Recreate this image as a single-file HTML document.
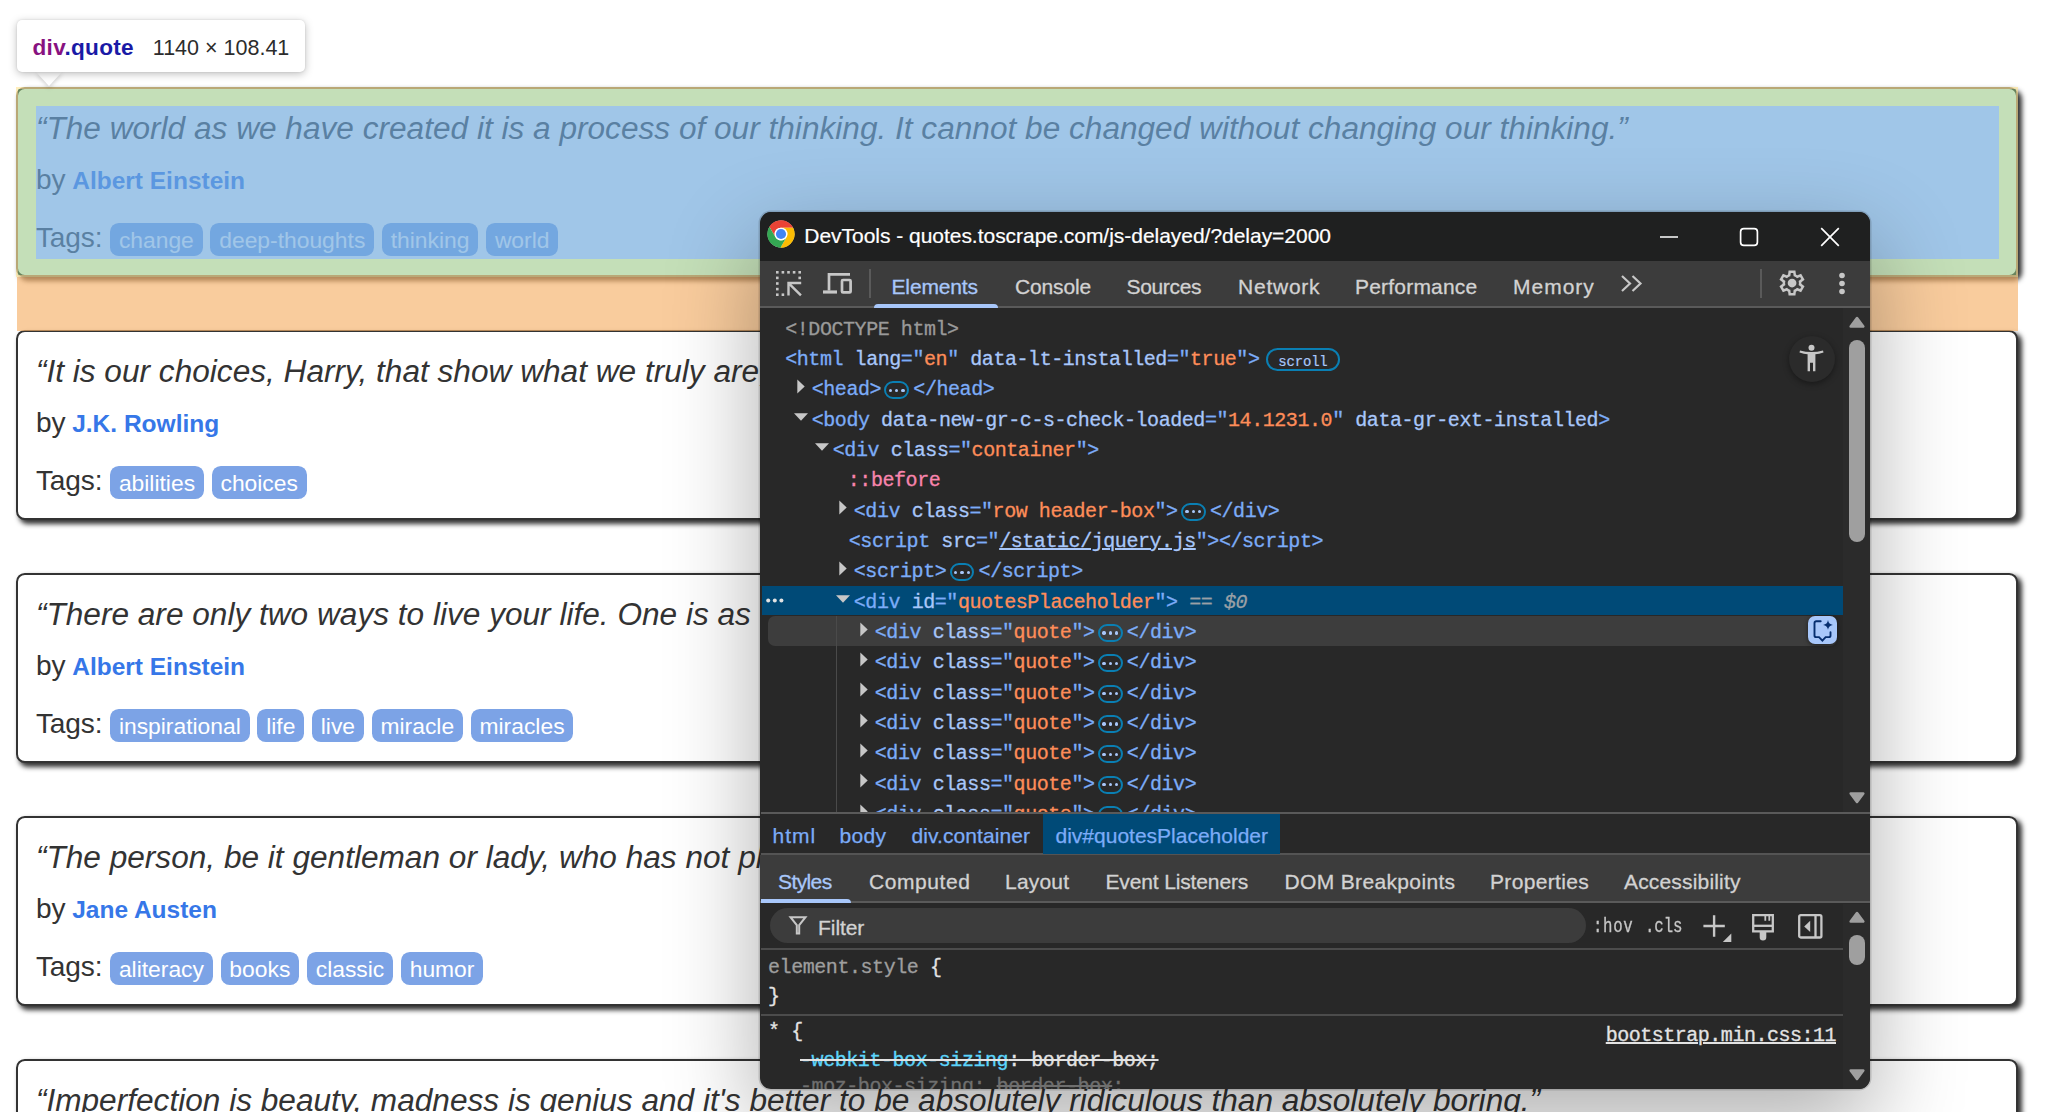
<!DOCTYPE html>
<html lang="en">
<head>
<meta charset="utf-8">
<title>Quotes to Scrape</title>
<style>
*{box-sizing:border-box;margin:0;padding:0}
html,body{width:2048px;height:1112px;overflow:hidden;background:#fff}
body{position:relative;font-family:"Liberation Sans",sans-serif;color:#333;font-size:28.1px;line-height:40px}
.quote{position:absolute;left:16px;width:2002px;height:189.6px;padding:16.75px 17.9px 17.25px;border:2px solid #333;border-radius:8.8px;box-shadow:3.5px 3.5px 5.3px #333;background:#fff;white-space:nowrap;overflow:hidden}
.quote .text{display:block;font-size:31.62px;line-height:45px;font-style:italic;margin-bottom:8.75px}
.quote .by{display:block}
.quote .author{font-size:24.5px;font-weight:bold;color:#3677E8;margin-left:-1.2px}
.quote .tl{letter-spacing:-.13px}
.quote .tags{margin-top:17.5px}
.quote .tag{font-size:22.85px;padding:3.5px 8.8px;border-radius:8.8px;color:#fff;background:#7CA3E6}
#q1{top:87px}#q2{top:330px}#q3{top:573px}#q4{top:816px}#q5{top:1059px}
/* highlight overlay */
#hl-margin{position:absolute;left:17px;top:277px;width:2001px;height:53.5px;background:rgba(246,178,107,.66)}
#hl-border{position:absolute;left:16px;top:87px;width:2002px;height:190px;border:2px solid rgba(255,229,153,.66)}
#hl-pad2{position:absolute;left:18px;top:89px;width:1998px;height:186px;border:17px solid rgba(147,196,125,.55);border-left-width:18px;border-right-width:17px;border-bottom-width:16px}
#hl-content{position:absolute;left:36px;top:106px;width:1963px;height:153px;background:rgba(111,168,220,.66)}
/* tooltip */
#tip{position:absolute;left:17px;top:20px;width:288px;height:52px;background:#fff;border-radius:5px;box-shadow:0 2px 9px rgba(0,0,0,.26),0 0 2px rgba(0,0,0,.12);font-family:"Liberation Sans","DejaVu Sans",sans-serif;font-size:21px;line-height:52px;white-space:nowrap}
#tip .n{position:absolute;left:15.5px;top:1.7px;font-weight:bold;color:#1a1aa6;font-size:22.6px;letter-spacing:.3px}
#tip .n i{font-style:normal;color:#881280}
#tip .d{position:absolute;left:135.8px;top:1.6px;color:#2c2c2c;font-size:21.5px;letter-spacing:0}
#tiparrow{position:absolute;left:36px;top:71.5px;width:0;height:0;border-left:13.2px solid transparent;border-right:13.2px solid transparent;border-top:14.5px solid #fff;filter:drop-shadow(0 2px 2px rgba(0,0,0,.18))}
/* devtools window */
#dtshadow{position:absolute;left:760px;top:212px;width:1110px;height:877px;border-radius:11px;box-shadow:0 34px 90px 4px rgba(0,0,0,.3),0 0 0 1.5px rgba(0,0,0,.15)}
#dt{position:absolute;left:760px;top:212px;width:1110px;height:877px;border-left:1px solid transparent;border-radius:11px;background:linear-gradient(#1f2020 0,#1f2020 48.8px,#3c3c3c 48.8px,#3c3c3c 94px,#5a5a5a 94px,#5a5a5a 96px,#282828 96px,#282828 643.4px,#3c3c3c 643.4px,#3c3c3c 689px,#5a5a5a 689px,#5a5a5a 691px,#282828 691px) border-box;overflow:hidden;font-family:"Liberation Sans","DejaVu Sans",sans-serif;font-size:21px;color:#e3e3e3;line-height:normal}
#dt .abs{position:absolute;white-space:nowrap}
#dt svg{position:absolute;overflow:visible}
#titlebar{position:absolute;left:0;top:0;width:1109px;height:48.8px;background:#1f2020}
#title{position:absolute;left:44.3px;top:0;height:48.4px;line-height:47px;color:#fff;font-size:21px;white-space:nowrap;-webkit-text-stroke:.2px #fff}
#toolbar{position:absolute;left:0;top:48.8px;width:1109px;height:47.2px;background:#3c3c3c;border-bottom:2px solid #5a5a5a}
.tab{position:absolute;height:30px;line-height:30px;color:#d2d2d2;white-space:nowrap;font-size:21px;-webkit-text-stroke:.3px currentColor}
.tab.on{color:#a8c7fa}
.uline{position:absolute;height:4px;background:#a8c7fa;border-radius:4px 4px 0 0}
.vsep{position:absolute;width:2px;background:#5a5a5a}
.mono{font-family:"Liberation Mono","DejaVu Sans Mono",monospace;font-size:20px;letter-spacing:-.437px;-webkit-text-stroke:.3px currentColor}
/* tree */
#tree{position:absolute;left:0;top:95.6px;width:1082px;height:504.6px;overflow:hidden;background:#282828}
.row{position:absolute;left:0;width:1082px;height:30.33px;line-height:30.33px;white-space:nowrap}
#tree .row{margin-top:-95.6px}
.row .code{position:absolute;top:0;height:30.33px;line-height:30.33px;white-space:pre}
.tg{color:#7cacf8}.an{color:#a8c7fa}.av{color:#fe8d59}.ps{color:#f985ad}.dc{color:#9a9a9a}
.lnk{text-decoration:underline;color:#a8c7fa}
.eq{color:#9aa0a6}.eq i{font-style:italic}
.tri{top:3.8px;fill:#c7c7c7}
.tri.trid{top:7.2px}
.ell{display:inline-block;position:relative;width:24.7px;height:17.9px;border:2px solid #0a7fb3;border-radius:9px;vertical-align:-4px;margin:0 4.3px 0 3.3px;letter-spacing:0}
.ell i{position:absolute;top:5.3px;width:3.3px;height:3.3px;border-radius:50%;background:#a8c7fa}
.ell i:nth-child(1){left:2.4px}.ell i:nth-child(2){left:8.7px}.ell i:nth-child(3){left:15px}
.badge{display:inline-block;height:23.5px;line-height:24px;border:2px solid #0a7fb3;border-radius:12px;padding:0 10.3px;margin-left:6.6px;font-size:14px;letter-spacing:-.2px;color:#a8c7fa;vertical-align:-1px;-webkit-text-stroke:.2px currentColor}
#selrow{position:absolute;left:1px;top:373.6px;width:1081.7px;height:29.4px;background:#004a77}
#hovrow{position:absolute;left:6.5px;top:403.8px;width:1069px;height:30.2px;background:#3d3d3d;border-radius:7px}
#guide{position:absolute;left:75px;top:403.8px;width:1.2px;height:200px;background:#4a4a4a}
.sb{position:absolute;left:1082px;width:27px;background:#2b2b2b}
.sbthumb{position:absolute;left:1088px;width:15.5px;background:#9f9f9f;border-radius:8px}
/* bottom */
#crumbs{position:absolute;left:0;top:600px;width:1109px;height:43.4px;background:#282828;border-top:2px solid #5a5a5a;border-bottom:2px solid #545454}
.crumb{position:absolute;top:0;height:39.6px;line-height:44px;color:#7cacf8;white-space:nowrap;-webkit-text-stroke:.25px currentColor}
#crumbsel{position:absolute;left:282px;top:0;width:237px;height:39.6px;background:#004a77}
#stabs{position:absolute;left:0;top:643.4px;width:1109px;height:47.6px;background:#3c3c3c;border-bottom:2px solid #5a5a5a}
#filterbar{position:absolute;left:0;top:690.6px;width:1082px;height:47.7px;background:#282828;border-bottom:2px solid #4c4c4c}
#filterpill{position:absolute;left:8.5px;top:5.4px;width:816px;height:35.5px;border-radius:18px;background:#3c3c3c}
#styles{position:absolute;left:0;top:738.8px;width:1082px;height:140px}
.sline{position:absolute;left:7px;white-space:pre;height:30px;line-height:30px}
.gray{color:#9e9e9e}
.hsep{position:absolute;left:0;width:1082px;height:2px;background:#4c4c4c}
.tab.sq{transform:scaleX(.75);transform-origin:0 50%;font-size:21px;color:#c7c7c7}

</style>
</head>
<body>
<div class="quote" id="q1"><span class="text">“The world as we have created it is a process of our thinking. It cannot be changed without changing our thinking.”</span><span class="by">by <small class="author">Albert Einstein</small></span><div class="tags"><span class="tl">Tags: </span><a class="tag">change</a> <a class="tag">deep-thoughts</a> <a class="tag">thinking</a> <a class="tag">world</a></div></div>
<div class="quote" id="q2"><span class="text">“It is our choices, Harry, that show what we truly are, far more than our abilities.”</span><span class="by">by <small class="author">J.K. Rowling</small></span><div class="tags"><span class="tl">Tags: </span><a class="tag">abilities</a> <a class="tag">choices</a></div></div>
<div class="quote" id="q3"><span class="text">“There are only two ways to live your life. One is as though nothing is a miracle. The other is as though everything is a miracle.”</span><span class="by">by <small class="author">Albert Einstein</small></span><div class="tags"><span class="tl">Tags: </span><a class="tag">inspirational</a> <a class="tag">life</a> <a class="tag">live</a> <a class="tag">miracle</a> <a class="tag">miracles</a></div></div>
<div class="quote" id="q4"><span class="text">“The person, be it gentleman or lady, who has not pleasure in a good novel, must be intolerably stupid.”</span><span class="by">by <small class="author">Jane Austen</small></span><div class="tags"><span class="tl">Tags: </span><a class="tag">aliteracy</a> <a class="tag">books</a> <a class="tag">classic</a> <a class="tag">humor</a></div></div>
<div class="quote" id="q5"><span class="text">“Imperfection is beauty, madness is genius and it's better to be absolutely ridiculous than absolutely boring.”</span><span class="by">by <small class="author">Marilyn Monroe</small></span><div class="tags"><span class="tl">Tags: </span><a class="tag">be-yourself</a> <a class="tag">inspirational</a></div></div>

<div id="hl-margin"></div>
<div id="hl-border"></div>
<div id="hl-pad2"></div>
<div id="hl-content"></div>
<div id="tiparrow"></div>
<div id="tip"><span class="n"><i>div</i>.quote</span><span class="d">1140 × 108.41</span></div>

<div id="dtshadow"></div>
<div id="dt">
<div id="titlebar">
<svg style="left:4.7px;top:7px" width="30" height="30" viewBox="0 0 48 48"><circle cx="24" cy="24" r="21.5" fill="#fff"/><path d="M5.42 12.22 A22 22 0 0 1 43.49 13.80 L24.00 13.80 A10.2 10.2 0 0 0 15.17 29.10 Z" fill="#ea4335"/><path d="M43.49 13.80 A22 22 0 0 1 23.09 45.98 L32.83 29.10 A10.2 10.2 0 0 0 24.00 13.80 Z" fill="#fbbc04"/><path d="M23.09 45.98 A22 22 0 0 1 5.42 12.22 L15.17 29.10 A10.2 10.2 0 0 0 32.83 29.10 Z" fill="#34a853"/><circle cx="24" cy="24" r="10.2" fill="#fff"/><circle cx="24" cy="24" r="8.1" fill="#4285f4"/></svg>
<div class="ttl" id="title" style="left:43.30px;letter-spacing:-0.03px">DevTools - quotes.toscrape.com/js-delayed/?delay=2000</div>
<svg style="left:898px;top:15px" width="20" height="20" viewBox="0 0 20 20"><path d="M1 10H19" stroke="#fff" stroke-width="1.7" fill="none"/></svg>
<svg style="left:978px;top:15px" width="20" height="20" viewBox="0 0 20 20"><rect x="1.6" y="1.6" width="16.8" height="16.8" rx="3.2" stroke="#fff" stroke-width="1.7" fill="none"/></svg>
<svg style="left:1059px;top:15px" width="20" height="20" viewBox="0 0 20 20"><path d="M1.2 1.2L18.8 18.8M18.8 1.2L1.2 18.8" stroke="#fff" stroke-width="1.7" fill="none"/></svg>
</div>
<div id="toolbar"></div>
<!-- toolbar icons -->
<svg style="left:14.8px;top:58.9px" width="26" height="26" viewBox="0 0 26 26" fill="#c7c7c7"><rect x="0.0" y="0.0" width="2.6" height="2.6"/><rect x="5.6" y="0.0" width="2.6" height="2.6"/><rect x="11.2" y="0.0" width="2.6" height="2.6"/><rect x="16.8" y="0.0" width="2.6" height="2.6"/><rect x="22.4" y="0.0" width="2.6" height="2.6"/><rect x="0.0" y="5.6" width="2.6" height="2.6"/><rect x="0.0" y="11.2" width="2.6" height="2.6"/><rect x="0.0" y="16.8" width="2.6" height="2.6"/><rect x="0.0" y="22.4" width="2.6" height="2.6"/><rect x="22.4" y="5.6" width="2.6" height="2.6"/><rect x="5.6" y="22.4" width="2.6" height="2.6"/><path d="M11.3 24.4V10.8H25.2V13.2H15.4L25.8 23.6L24.1 25.3L13.7 14.9V24.4Z"/></svg>
<svg style="left:62px;top:61px" width="29" height="21" viewBox="0 0 29 21" fill="none" stroke="#c7c7c7" stroke-width="2.7"><path d="M27 1.4H6V17.5"/><path d="M0 19H14" stroke-width="3.2"/><rect x="19" y="7" width="8.6" height="12.4" rx="1"/></svg>
<div class="vsep" style="left:108px;top:57px;height:28.5px"></div>
<div class="tab on" id="t1" style="left:130.50px;top:59.8px;letter-spacing:-0.14px">Elements</div>
<div class="uline" style="left:113px;top:91.8px;width:123.5px"></div>
<div class="tab" id="t2" style="left:254.00px;top:59.8px;letter-spacing:-0.16px">Console</div>
<div class="tab" id="t3" style="left:365.50px;top:59.8px;letter-spacing:-0.34px">Sources</div>
<div class="tab" id="t4" style="left:477.10px;top:59.8px;letter-spacing:0.75px">Network</div>
<div class="tab" id="t5" style="left:594.00px;top:59.8px;letter-spacing:0.20px">Performance</div>
<div class="tab" id="t6" style="left:752.00px;top:59.8px;letter-spacing:1.00px">Memory</div>
<svg style="left:859.5px;top:63px" width="21" height="17" viewBox="0 0 21 17" fill="none" stroke="#c7c7c7" stroke-width="2.2"><path d="M1 1L9 8.5L1 16M11.5 1L19.5 8.5L11.5 16"/></svg>
<div class="vsep" style="left:998.5px;top:57px;height:28.5px"></div>
<svg style="left:1016.4px;top:56.3px" width="30" height="30" viewBox="0 0 24 24"><path fill="#c7c7c7" d="M9.25 22l-.4-3.2q-.325-.125-.612-.3-.288-.175-.563-.375L4.7 19.375l-2.75-4.75 2.575-1.95Q4.5 12.5 4.5 12.338v-.675q0-.163.025-.338L1.95 9.375l2.75-4.75 2.975 1.25q.275-.2.575-.375.3-.175.6-.3l.4-3.2h5.5l.4 3.2q.325.125.613.3.287.175.562.375l2.975-1.25 2.75 4.75-2.575 1.95q.025.175.025.338v.674q0 .163-.05.338l2.575 1.95-2.75 4.75-2.95-1.25q-.275.2-.575.375-.3.175-.6.3l-.4 3.2zm1.75-2h1.975l.35-2.65q.775-.2 1.438-.588.662-.387 1.212-.937l2.475 1.025.975-1.7-2.15-1.625q.125-.35.175-.738.05-.387.05-.787t-.05-.788q-.05-.387-.175-.737l2.15-1.625-.975-1.7-2.475 1.05q-.55-.575-1.212-.963-.663-.387-1.438-.587L13 4h-1.975l-.35 2.65q-.775.2-1.437.587-.663.388-1.213.938L5.55 7.15l-.975 1.7 2.15 1.6q-.125.375-.175.75-.05.375-.05.8 0 .4.05.775t.175.75l-2.15 1.625.975 1.7 2.475-1.05q.55.575 1.213.962.662.388 1.437.588zm1.05-4.5q1.45 0 2.475-1.025Q15.550 13.450 15.550 12q0-1.450-1.025-2.475Q13.500 8.500 12.050 8.500q-1.475 0-2.488 1.025Q8.550 10.550 8.550 12q0 1.450 1.012 2.475Q10.575 15.500 12.050 15.500z"/></svg>
<svg style="left:1077px;top:60px" width="8" height="24" viewBox="0 0 8 24"><circle cx="4" cy="3.5" r="2.8" fill="#c7c7c7"/><circle cx="4" cy="11.5" r="2.8" fill="#c7c7c7"/><circle cx="4" cy="19.5" r="2.8" fill="#c7c7c7"/></svg>
<!-- tree -->
<div id="tree">
<div id="selrow" style="margin-top:-95.6px"></div>
<div id="hovrow" style="margin-top:-95.6px"></div>
<div id="guide" style="margin-top:-95.6px"></div>
<div class="row" style="top:102.60px"><span class="code mono" style="left:24.2px"><span class="dc">&lt;!DOCTYPE html&gt;</span></span></div>
<div class="row" style="top:132.93px"><span class="code mono" style="left:24.2px"><span class="tg">&lt;html </span><span class="an">lang</span><span class="tg">="</span><span class="av">en</span><span class="tg">"</span> <span class="an">data-lt-installed</span><span class="tg">="</span><span class="av">true</span><span class="tg">"</span><span class="tg">&gt;</span><span class="badge">scroll</span></span></div>
<div class="row" style="top:163.26px"><svg class="tri" style="left:35.8px" width="8" height="15" viewBox="0 0 8 15"><path d="M0.3 0.4 L7.7 7.5 L0.3 14.6 Z"/></svg><span class="code mono" style="left:50.7px"><span class="tg">&lt;head&gt;</span><span class="ell"><i></i><i></i><i></i></span><span class="tg">&lt;/head&gt;</span></span></div>
<div class="row" style="top:193.59px"><svg class="tri trid" style="left:32.7px" width="14" height="8" viewBox="0 0 14 8"><path d="M0 0.3 L14 0.3 L7 7.8 Z"/></svg><span class="code mono" style="left:50.7px"><span class="tg">&lt;body </span><span class="an">data-new-gr-c-s-check-loaded</span><span class="tg">="</span><span class="av">14.1231.0</span><span class="tg">"</span> <span class="an">data-gr-ext-installed</span><span class="tg">&gt;</span></span></div>
<div class="row" style="top:223.92px"><svg class="tri trid" style="left:53.7px" width="14" height="8" viewBox="0 0 14 8"><path d="M0 0.3 L14 0.3 L7 7.8 Z"/></svg><span class="code mono" style="left:71.8px"><span class="tg">&lt;div </span><span class="an">class</span><span class="tg">="</span><span class="av">container</span><span class="tg">"</span><span class="tg">&gt;</span></span></div>
<div class="row" style="top:254.25px"><span class="code mono" style="left:86.8px"><span class="ps">::before</span></span></div>
<div class="row" style="top:284.58px"><svg class="tri" style="left:77.9px" width="8" height="15" viewBox="0 0 8 15"><path d="M0.3 0.4 L7.7 7.5 L0.3 14.6 Z"/></svg><span class="code mono" style="left:92.8px"><span class="tg">&lt;div </span><span class="an">class</span><span class="tg">="</span><span class="av">row header-box</span><span class="tg">"</span><span class="tg">&gt;</span><span class="ell"><i></i><i></i><i></i></span><span class="tg">&lt;/div&gt;</span></span></div>
<div class="row" style="top:314.91px"><span class="code mono" style="left:87.8px"><span class="tg">&lt;script </span><span class="an">src</span><span class="tg">="</span><span class="av"><span class="lnk">/static/jquery.js</span></span><span class="tg">"</span><span class="tg">&gt;&lt;/script&gt;</span></span></div>
<div class="row" style="top:345.24px"><svg class="tri" style="left:77.9px" width="8" height="15" viewBox="0 0 8 15"><path d="M0.3 0.4 L7.7 7.5 L0.3 14.6 Z"/></svg><span class="code mono" style="left:92.8px"><span class="tg">&lt;script&gt;</span><span class="ell"><i></i><i></i><i></i></span><span class="tg">&lt;/script&gt;</span></span></div>
<div class="row" style="top:375.57px"><svg class="tri trid" style="left:74.8px" width="14" height="8" viewBox="0 0 14 8"><path d="M0 0.3 L14 0.3 L7 7.8 Z"/></svg><span class="code mono" style="left:92.8px"><span class="tg">&lt;div </span><span class="an">id</span><span class="tg">="</span><span class="av">quotesPlaceholder</span><span class="tg">"</span><span class="tg">&gt;</span><span class="eq"> == <i>$0</i></span></span></div>
<div class="row" style="top:405.90px"><svg class="tri" style="left:98.9px" width="8" height="15" viewBox="0 0 8 15"><path d="M0.3 0.4 L7.7 7.5 L0.3 14.6 Z"/></svg><span class="code mono" style="left:113.8px"><span class="tg">&lt;div </span><span class="an">class</span><span class="tg">="</span><span class="av">quote</span><span class="tg">"</span><span class="tg">&gt;</span><span class="ell"><i></i><i></i><i></i></span><span class="tg">&lt;/div&gt;</span></span></div>
<div class="row" style="top:436.23px"><svg class="tri" style="left:98.9px" width="8" height="15" viewBox="0 0 8 15"><path d="M0.3 0.4 L7.7 7.5 L0.3 14.6 Z"/></svg><span class="code mono" style="left:113.8px"><span class="tg">&lt;div </span><span class="an">class</span><span class="tg">="</span><span class="av">quote</span><span class="tg">"</span><span class="tg">&gt;</span><span class="ell"><i></i><i></i><i></i></span><span class="tg">&lt;/div&gt;</span></span></div>
<div class="row" style="top:466.56px"><svg class="tri" style="left:98.9px" width="8" height="15" viewBox="0 0 8 15"><path d="M0.3 0.4 L7.7 7.5 L0.3 14.6 Z"/></svg><span class="code mono" style="left:113.8px"><span class="tg">&lt;div </span><span class="an">class</span><span class="tg">="</span><span class="av">quote</span><span class="tg">"</span><span class="tg">&gt;</span><span class="ell"><i></i><i></i><i></i></span><span class="tg">&lt;/div&gt;</span></span></div>
<div class="row" style="top:496.89px"><svg class="tri" style="left:98.9px" width="8" height="15" viewBox="0 0 8 15"><path d="M0.3 0.4 L7.7 7.5 L0.3 14.6 Z"/></svg><span class="code mono" style="left:113.8px"><span class="tg">&lt;div </span><span class="an">class</span><span class="tg">="</span><span class="av">quote</span><span class="tg">"</span><span class="tg">&gt;</span><span class="ell"><i></i><i></i><i></i></span><span class="tg">&lt;/div&gt;</span></span></div>
<div class="row" style="top:527.22px"><svg class="tri" style="left:98.9px" width="8" height="15" viewBox="0 0 8 15"><path d="M0.3 0.4 L7.7 7.5 L0.3 14.6 Z"/></svg><span class="code mono" style="left:113.8px"><span class="tg">&lt;div </span><span class="an">class</span><span class="tg">="</span><span class="av">quote</span><span class="tg">"</span><span class="tg">&gt;</span><span class="ell"><i></i><i></i><i></i></span><span class="tg">&lt;/div&gt;</span></span></div>
<div class="row" style="top:557.55px"><svg class="tri" style="left:98.9px" width="8" height="15" viewBox="0 0 8 15"><path d="M0.3 0.4 L7.7 7.5 L0.3 14.6 Z"/></svg><span class="code mono" style="left:113.8px"><span class="tg">&lt;div </span><span class="an">class</span><span class="tg">="</span><span class="av">quote</span><span class="tg">"</span><span class="tg">&gt;</span><span class="ell"><i></i><i></i><i></i></span><span class="tg">&lt;/div&gt;</span></span></div>
<div class="row" style="top:587.88px"><svg class="tri" style="left:98.9px" width="8" height="15" viewBox="0 0 8 15"><path d="M0.3 0.4 L7.7 7.5 L0.3 14.6 Z"/></svg><span class="code mono" style="left:113.8px"><span class="tg">&lt;div </span><span class="an">class</span><span class="tg">="</span><span class="av">quote</span><span class="tg">"</span><span class="tg">&gt;</span><span class="ell"><i></i><i></i><i></i></span><span class="tg">&lt;/div&gt;</span></span></div>
<svg style="left:4.5px;top:290px" width="18" height="5" viewBox="0 0 18 5"><circle cx="2.2" cy="2.5" r="2" fill="#e3e3e3"/><circle cx="8.8" cy="2.5" r="2" fill="#e3e3e3"/><circle cx="15.4" cy="2.5" r="2" fill="#e3e3e3"/></svg>
<!-- AI button -->
<div class="abs" style="left:1047px;top:308px;width:28.8px;height:28.8px;border-radius:7px;background:#a8c7fa;box-shadow:0 1px 4px rgba(0,0,0,.5)"></div>
<svg style="left:1047px;top:308px" width="28.8" height="28.8" viewBox="0 0 28.8 28.8"><path d="M12.700 5.200H8.200a1.700 1.700 0 0 0-1.700 1.700V19.400a1.700 1.700 0 0 0 1.700 1.700H11L14.400 24.600L17.600 21.100H20.800a1.700 1.700 0 0 0 1.700-1.700V16.200" stroke="#062e6f" stroke-width="1.900" fill="none" stroke-linecap="round"/><path d="M20 4Q20.600 8.300 24.900 8.900Q20.600 9.500 20 13.800Q19.400 9.500 15.100 8.900Q19.400 8.300 20 4Z" fill="#062e6f"/></svg>
<!-- accessibility floating button -->
<div class="abs" style="left:1027.7px;top:28.2px;width:46px;height:46px;border-radius:50%;background:#2b2b2b;box-shadow:0 2px 6px rgba(0,0,0,.4)"></div>
<svg style="left:1038.2px;top:36.800px" width="25" height="28.600" viewBox="0 0 25 28" fill="#c7c7c7"><circle cx="12.5" cy="3.4" r="3"/><path d="M0.5 8.2L1 6.2Q12.5 9.2 24 6.200L24.500 8.200Q20 9.600 16.400 10V27H14V18.500H11V27H8.600V10Q5 9.600 0.500 8.200Z"/></svg>
</div>
<!-- tree scrollbar -->
<div class="sb" style="top:95.6px;height:504.6px"></div>
<svg style="left:1087.5px;top:104px" width="16" height="12" viewBox="0 0 16 12"><path d="M8 2L14.300 10.500H1.700Z" fill="#9f9f9f" stroke="#9f9f9f" stroke-width="2.600" stroke-linejoin="round"/></svg>
<div class="sbthumb" style="top:127.5px;height:202px"></div>
<svg style="left:1087.5px;top:579.5px" width="16" height="12" viewBox="0 0 16 12"><path d="M8 10L14.300 1.500H1.700Z" fill="#9f9f9f" stroke="#9f9f9f" stroke-width="2.600" stroke-linejoin="round"/></svg>
<!-- breadcrumbs -->
<div id="crumbs">
<div id="crumbsel"></div>
<div class="crumb" id="c1" style="left:11.5px;letter-spacing:1.00px">html</div>
<div class="crumb" id="c2" style="left:78.5px;letter-spacing:0.33px">body</div>
<div class="crumb" id="c3" style="left:150.5px;letter-spacing:0.08px">div.container</div>
<div class="crumb" id="c4" style="left:294.50px;color:#7cacf8;letter-spacing:0.00px">div#quotesPlaceholder</div>
</div>
<!-- styles tabs -->
<div id="stabs"></div>
<div class="tab on" id="s1" style="left:17.00px;top:654.8px;letter-spacing:-0.60px">Styles</div>
<div class="uline" style="left:0;top:686.6px;width:90px;border-radius:0 4px 0 0"></div>
<div class="tab" id="s2" style="left:108.00px;top:654.8px;letter-spacing:0.57px">Computed</div>
<div class="tab" id="s3" style="left:244.00px;top:654.8px;letter-spacing:0.20px">Layout</div>
<div class="tab" id="s4" style="left:344.50px;top:654.8px;letter-spacing:-0.14px">Event Listeners</div>
<div class="tab" id="s5" style="left:523.50px;top:654.8px;letter-spacing:0.35px">DOM Breakpoints</div>
<div class="tab" id="s6" style="left:729.00px;top:654.8px;letter-spacing:0.33px">Properties</div>
<div class="tab" id="s7" style="left:863px;top:654.8px;letter-spacing:0.17px">Accessibility</div>
<!-- filter bar -->
<div id="filterbar">
<div id="filterpill"></div>
<svg style="left:27.5px;top:13.9px" width="18" height="19" viewBox="0 0 18 19" fill="none" stroke="#c7c7c7" stroke-width="2"><path d="M1.500 1.200H16.500L10.200 9V17.500H7.800V9Z"/></svg>
<div class="tab" id="f0" style="left:57.10px;top:10px;letter-spacing:-0.10px">Filter</div>
<div class="tab mono sq" id="f1" style="left:832.00px;top:9.6px;letter-spacing:0.83px">:hov</div>
<div class="tab mono sq" id="f2" style="left:883.50px;top:9.6px;letter-spacing:-0.17px">.cls</div>
<svg style="left:941.6px;top:9.4px" width="30" height="30" viewBox="0 0 30 30" fill="none" stroke="#c7c7c7" stroke-width="2.4"><path d="M0.4 14H21.8M11.1 3.3V24.700"/><path d="M28.300 21.400V29.900H19.800Z" fill="#c7c7c7" stroke="none"/></svg>
<svg style="left:991px;top:11px" width="22" height="27" viewBox="0 0 22 27" fill="none" stroke="#c7c7c7" stroke-width="2.3"><path d="M1.200 1.200H20.800V17.300H1.200Z"/><path d="M1.200 11.800H20.800"/><path d="M13.300 1.500V6.800M17.300 1.500V6.800" stroke-width="1.800"/><path d="M7.700 17.300H14.300V23.200a3.300 3.300 0 0 1-6.600 0Z" fill="#c7c7c7" stroke="none"/></svg>
<svg style="left:1037px;top:11px" width="25" height="25" viewBox="0 0 25 25" fill="none" stroke="#c7c7c7" stroke-width="2.3"><rect x="1.200" y="1.200" width="22.200" height="22.300" rx="1.500"/><path d="M17.500 1.500V23.500"/><path d="M12.200 6.800V18L6.200 12.400Z" fill="#c7c7c7" stroke="none"/></svg>
</div>
<!-- styles content -->
<div id="styles">
<div class="sline mono" style="top:2.5px"><span class="gray">element.style</span> {</div>
<div class="sline mono" style="top:31.7px">}</div>
<div class="hsep" style="top:62.800px"></div>
<div class="sline mono" style="top:66.2px">* {</div>
<div class="sline mono" style="top:95px;left:39px"><span style="text-decoration:line-through;text-decoration-color:#e3e3e3;text-decoration-thickness:1.6px"><span style="color:#5cd5fb">-webkit-box-sizing</span>: border-box;</span></div>
<div class="sline mono" style="top:121px;left:39px;color:#6f6f6f">-moz-box-sizing: <span style="text-decoration:line-through">border-box</span>;</div>
<div class="sline mono" id="srclink" style="top:70.5px;left:auto;right:7.00px;text-decoration:underline;letter-spacing:-0.49px">bootstrap.min.css:11</div>
</div>
<!-- styles scrollbar -->
<div class="sb" style="top:692px;height:185px"></div>
<svg style="left:1087.500px;top:699px" width="16" height="12" viewBox="0 0 16 12"><path d="M8 2L14.300 10.500H1.700Z" fill="#9f9f9f" stroke="#9f9f9f" stroke-width="2.600" stroke-linejoin="round"/></svg>
<div class="sbthumb" style="top:723px;height:30px"></div>
<svg style="left:1087.500px;top:857px" width="16" height="12" viewBox="0 0 16 12"><path d="M8 10L14.300 1.500H1.700Z" fill="#9f9f9f" stroke="#9f9f9f" stroke-width="2.600" stroke-linejoin="round"/></svg>
</div>

</body>
</html>
